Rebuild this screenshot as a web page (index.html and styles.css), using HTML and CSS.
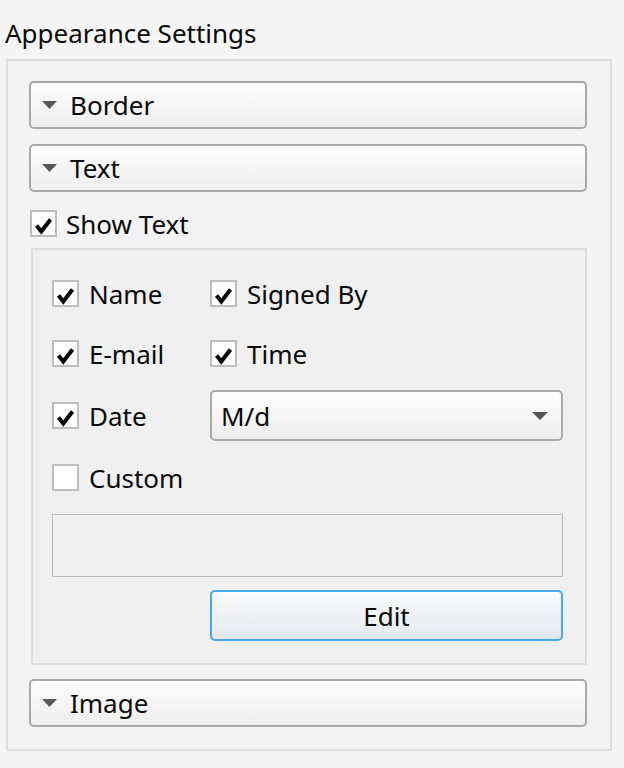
FILE: index.html
```html
<!DOCTYPE html>
<html>
<head>
<meta charset="utf-8">
<link rel="stylesheet" href="styles.css">
</head>
<body>
<div class="title">Appearance Settings</div>
<div class="group">
  <div class="section-btn"><svg class="tri" width="15" height="8" viewBox="0 0 15 8"><polygon points="0,0 15,0 7.5,8"/></svg><span>Border</span></div>
  <div class="section-btn gap15"><svg class="tri" width="15" height="8" viewBox="0 0 15 8"><polygon points="0,0 15,0 7.5,8"/></svg><span>Text</span></div>
  <label class="check show-text"><span class="box"><svg width="23" height="23" viewBox="0 0 23 23"><path d="M4.5 13.5 L9.3 19.5 L18.5 7.5"/></svg></span><span>Show Text</span></label>
  <div class="inner">
    <div class="row">
      <label class="check col1"><span class="box"><svg width="23" height="23" viewBox="0 0 23 23"><path d="M4.5 13.5 L9.3 19.5 L18.5 7.5"/></svg></span><span>Name</span></label>
      <label class="check"><span class="box"><svg width="23" height="23" viewBox="0 0 23 23"><path d="M4.5 13.5 L9.3 19.5 L18.5 7.5"/></svg></span><span>Signed By</span></label>
    </div>
    <div class="row mt33">
      <label class="check col1"><span class="box"><svg width="23" height="23" viewBox="0 0 23 23"><path d="M4.5 13.5 L9.3 19.5 L18.5 7.5"/></svg></span><span>E-mail</span></label>
      <label class="check"><span class="box"><svg width="23" height="23" viewBox="0 0 23 23"><path d="M4.5 13.5 L9.3 19.5 L18.5 7.5"/></svg></span><span>Time</span></label>
    </div>
    <div class="row mt23">
      <label class="check col1"><span class="box"><svg width="23" height="23" viewBox="0 0 23 23"><path d="M4.5 13.5 L9.3 19.5 L18.5 7.5"/></svg></span><span>Date</span></label>
      <div class="combo"><span>M/d</span><svg class="tri" width="16" height="8" viewBox="0 0 16 8"><polygon points="0,0 16,0 8,8"/></svg></div>
    </div>
    <div class="row mt23">
      <label class="check col1"><span class="box empty"></span><span>Custom</span></label>
    </div>
    <div class="field mt23"></div>
    <div class="row mt13">
      <div class="col1"></div>
      <div class="edit-btn">Edit</div>
    </div>
  </div>
  <div class="section-btn gap14"><svg class="tri" width="15" height="8" viewBox="0 0 15 8"><polygon points="0,0 15,0 7.5,8"/></svg><span>Image</span></div>
</div>
</body>
</html>
```
FILE: styles.css
```css
html, body {
  margin: 0;
  padding: 0;
  background: #f5f5f5;
}
body {
  font-family: "Noto Sans", "Open Sans", sans-serif;
  font-size: 26px;
  color: #0a0a0a;
  width: 624px;
  height: 768px;
  overflow: hidden;
}
.title {
  padding: 16px 0 0 5px;
  height: 35px;
  line-height: 35px;
  margin-bottom: 8px;
}
.group {
  margin-left: 6px;
  width: 606px;
  box-sizing: border-box;
  border: 2px solid #dedede;
  background: #f3f3f3;
  padding: 20px 23px 22px 21px;
  display: flex;
  flex-direction: column;
}
.section-btn {
  height: 48px;
  box-sizing: border-box;
  border: 2px solid #a9a9a9;
  border-radius: 5px;
  background: linear-gradient(#fdfdfd, #eeeeee);
  display: flex;
  align-items: center;
  padding-left: 11px;
}
.section-btn .tri {
  margin-right: 13px;
  fill: #585858;
}
.gap15 { margin-top: 15px; }
.gap14 { margin-top: 14px; }
.check {
  display: flex;
  align-items: center;
  height: 27px;
}
.box {
  width: 27px;
  height: 27px;
  box-sizing: border-box;
  border: 2px solid #bdbdbd;
  background: #fff;
  margin-right: 10px;
  display: flex;
  align-items: center;
  justify-content: center;
  flex: none;
}
.box svg path {
  fill: none;
  stroke: #000;
  stroke-width: 4;
  stroke-linejoin: miter;
  stroke-linecap: butt;
}
.show-text {
  margin-top: 18px;
  margin-left: 1px;
}
.show-text .box {
  margin-right: 9px;
}
.inner {
  margin-top: 11px;
  margin-left: 2px;
  border: 2px solid #dcdcdc;
  background: #f0f0f0;
  padding: 30px 22px 22px 19px;
  display: flex;
  flex-direction: column;
}
.row {
  display: flex;
  align-items: center;
}
.col1 {
  width: 158px;
  flex: none;
}
.mt33 { margin-top: 33px; }
.mt23 { margin-top: 23px; }
.mt13 { margin-top: 13px; }
.combo {
  width: 353px;
  height: 51px;
  box-sizing: border-box;
  border: 2px solid #ababab;
  border-radius: 5px;
  background: linear-gradient(#fdfdfd, #eeeeee);
  display: flex;
  align-items: center;
  justify-content: space-between;
  padding: 0 13px 0 9px;
}
.combo .tri {
  fill: #555;
}
.field {
  height: 63px;
  box-sizing: border-box;
  border: 1px solid #bababa;
  background: #f0f0f0;
}
.edit-btn {
  width: 353px;
  height: 51px;
  box-sizing: border-box;
  border: 2px solid #45a9f4;
  border-radius: 5px;
  background: linear-gradient(#fafbfc, #e4e8ed);
  display: flex;
  align-items: center;
  justify-content: center;
}
```
